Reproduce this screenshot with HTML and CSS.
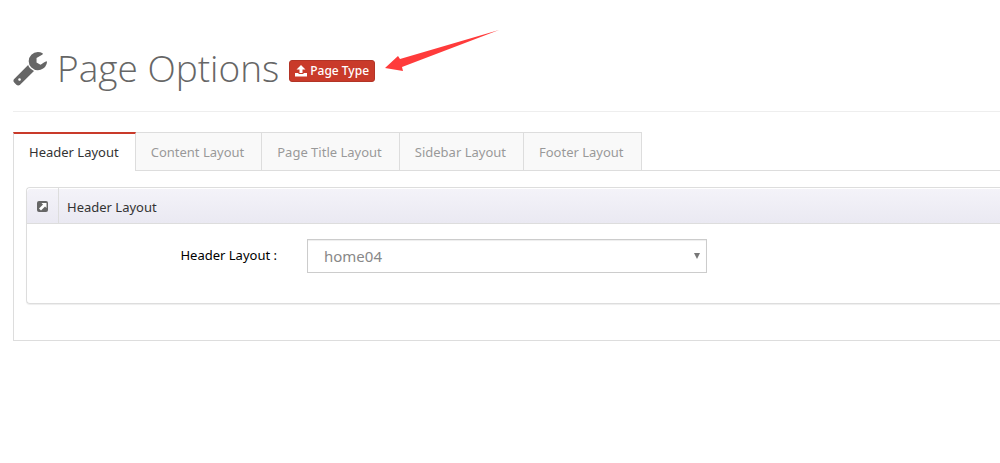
FILE: index.html
```html
<!DOCTYPE html>
<html lang="en">
<head>
  <meta charset="UTF-8" />
  <meta name="viewport" content="width=device-width, initial-scale=1.0" />
  <title>Page Options</title>
  <link rel="stylesheet" href="styles.css">
</head>
<body>

  <main class="page">
    <header class="page-header">
      <svg class="wrench" viewBox="64 128 1664 1664" aria-hidden="true">
        <path d="M448 1472q0-26-19-45t-45-19-45 19-19 45 19 45 45 19 45-19 19-45zm644-420l-682 682q-37 37-90 37-52 0-91-37l-106-108q-38-36-38-90 0-53 38-91l681-681q39 98 114.500 173.500t173.500 114.500zm634-435q0 39-23 106-47 134-164.500 217.500t-258.500 83.500q-185 0-316.500-131.500t-131.500-316.500 131.500-316.500 316.500-131.500q58 0 121.500 16.500t107.500 46.500q16 11 16 28t-16 28l-293 169v224l193 107q5-3 79-48.500t135.500-81 70.500-35.500q15 0 23.500 10t8.500 25z"/>
      </svg>
      <h1>Page Options</h1>
      <button class="btn" type="button">
        <svg viewBox="0 0 12 12" aria-hidden="true">
          <path d="M6 0L10.500 4.500H7.500V8H4.500V4.500H1.500ZM0 8H3.500V9H8.500V8H12V11.500H0Z"/>
        </svg>
        Page Type
      </button>
      <svg class="arrow" viewBox="0 0 114 42" aria-hidden="true">
        <path d="M0 38L13 26L15 29L114 0L17 37L18 41Z"/>
      </svg>
    </header>

    <nav class="tabs">
      <a href="#header" class="tab active">Header Layout</a>
      <a href="#content" class="tab">Content Layout</a>
      <a href="#page-title" class="tab">Page Title Layout</a>
      <a href="#sidebar" class="tab">Sidebar Layout</a>
      <a href="#footer" class="tab">Footer Layout</a>
    </nav>

    <div class="tab-content" id="header">
      <section class="widget">
        <div class="widget-title">
          <span class="icon">
            <svg viewBox="0 0 12 12" aria-hidden="true">
              <rect y="1" width="11" height="11" rx="2"/>
              <path d="M4.500 3H9.500V8L8 6.500L4 10.500L2 8.500L6 4.500Z"/>
            </svg>
          </span>
          <h2>Header Layout</h2>
        </div>
        <form class="widget-content">
          <label for="header-layout">Header Layout :</label>
          <div class="select">
            <select id="header-layout">
              <option>home04</option>
            </select>
          </div>
        </form>
      </section>
    </div>
  </main>

</body>
</html>
```

FILE: styles.css
```css
* {
  margin: 0;
  padding: 0;
  box-sizing: border-box;
}

body {
  font-family: "Noto Sans", "Open Sans", sans-serif;
  font-size: 13px;
  line-height: 20px;
  color: #333;
  background-color: #fff;
}

.page {
  padding: 24px 0 24px 13px;
}

/* Title row */
.page-header {
  display: flex;
  align-items: center;
  height: 88px;
  border-bottom: 1px solid #eee;
}

.wrench {
  width: 34px;
  height: 34px;
  margin: 2px 10px 0 0;
  fill: #666;
}

h1 {
  font-family: "Open Sans", "Noto Sans", sans-serif;
  font-size: 37px;
  font-weight: 300;
  line-height: 48px;
  color: #666;
}

.btn {
  display: flex;
  align-items: center;
  gap: 3px;
  height: 22px;
  margin: 6px 0 0 10px;
  padding: 0 5px;
  border: 1px solid #b33426;
  border-radius: 3px;
  background-color: #c93a2a;
  font-family: inherit;
  font-size: 12px;
  font-weight: 500;
  color: #fff;
  cursor: pointer;
}

.btn svg {
  width: 12px;
  height: 12px;
  fill: #fff;
}

.arrow {
  width: 114px;
  height: 42px;
  margin: 0 0 34px 10px;
  fill: #ff3b3b;
}

/* Tabs */
.tabs {
  display: flex;
  align-items: flex-end;
  margin-top: 20px;
  border-bottom: 1px solid #ddd;
}

.tab {
  height: 38px;
  padding: 9px 16px 9px 15px;
  border: 1px solid #ddd;
  border-width: 1px 1px 0 0;
  background-color: #f9f9f9;
  color: #999;
  text-decoration: none;
}

.tab.active {
  height: 39px;
  margin-bottom: -1px;
  padding-top: 8px;
  border-width: 2px 1px 0 1px;
  border-top-color: #c93a2a;
  background-color: #fff;
  color: #333;
}

.tab:not(.active) {
  padding-right: 17px;
}

.tab-content {
  padding: 16px 0 36px 12px;
  border: 1px solid #ddd;
  border-width: 0 0 1px 1px;
}

/* Panel */
.widget {
  border: 1px solid #ddd;
  border-right: 0;
  border-radius: 4px 0 0 4px;
  box-shadow: 0 1px 1px #eee;
}

.widget-title {
  display: flex;
  height: 36px;
  border-bottom: 1px solid #ddd;
  border-radius: 4px 0 0 0;
  background-image: linear-gradient(#f4f3f9, #eae9f2);
  box-shadow: inset 0 1px 0 #fff;
}

.icon {
  display: flex;
  align-items: center;
  justify-content: center;
  width: 32px;
  border-right: 1px solid #ddd;
}

.icon svg {
  width: 12px;
  height: 12px;
  fill: #666;
}

.icon path {
  fill: #fff;
}

.widget-title h2 {
  padding: 9px 8px;
  font-size: 13px;
  font-weight: 400;
  line-height: 20px;
}

.widget-content {
  display: flex;
  gap: 30px;
  padding: 15px 0 30px;
}

.widget-content label {
  width: 250px;
  padding-top: 6px;
  color: #000;
  text-align: right;
}

.select {
  position: relative;
  width: 400px;
}

.select select {
  display: block;
  width: 100%;
  height: 34px;
  padding: 0 16px;
  border: 1px solid #ccc;
  border-radius: 0;
  box-shadow: inset 0 1px 1px #eee;
  appearance: none;
  background-color: #fff;
  font-family: inherit;
  font-size: 15px;
  color: #888;
}

/* Drop-down marker over the select */
.select::after {
  content: "";
  position: absolute;
  top: 14px;
  right: 7px;
  border: 3px solid transparent;
  border-top: 6px solid #777;
  border-bottom: 0;
  pointer-events: none;
}
```
